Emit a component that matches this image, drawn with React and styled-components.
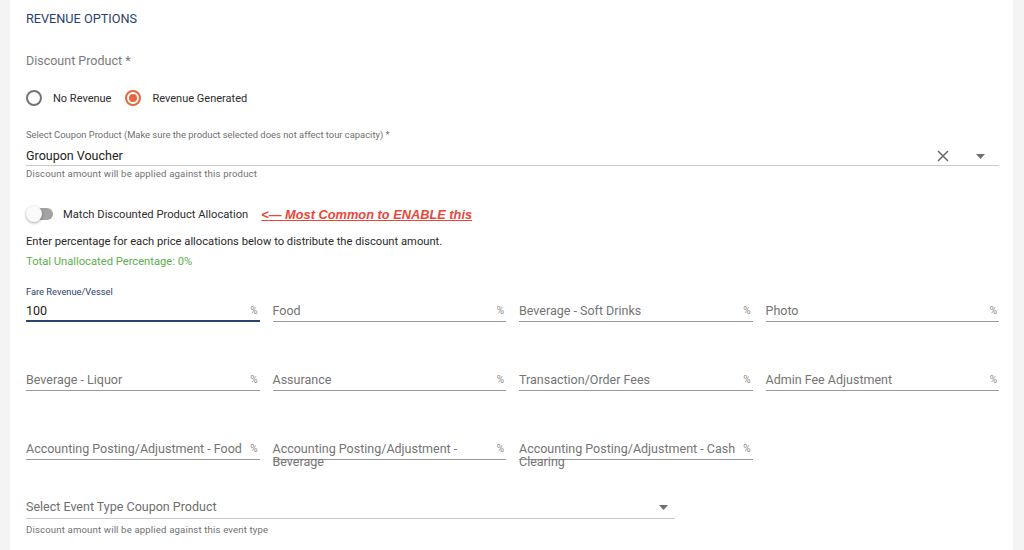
import React from 'react';
import styled, { createGlobalStyle } from 'styled-components';

const GlobalStyle = createGlobalStyle`
  html, body {
    margin: 0;
    padding: 0;
    background: #f4f4f4;
    font-family: Roboto, "Liberation Sans", Arial, sans-serif;
  }
`;

const Card = styled.section`
  margin: 0 11px 0 10px;
  padding: 0 14px 0 16px;
  background: #fff;
  height: 550px;
  overflow: hidden;
  box-sizing: border-box;
`;

const Title = styled.h3`
  margin: 0;
  height: 36px;
  line-height: 37px;
  font-size: 12.7px;
  font-weight: 400;
  color: #2b416e;
  text-transform: uppercase;
`;

const GroupLabel = styled.div`
  margin-top: 12px;
  height: 24px;
  line-height: 25px;
  font-size: 12.5px;
  color: #7b7b7b;
`;

const RadioRow = styled.div`
  margin-top: 14px;
  height: 24px;
  display: flex;
  align-items: center;
  gap: 14px;
`;

const RadioItem = styled.label`
  display: flex;
  align-items: center;
  gap: 11px;
  font-size: 11px;
  color: #2d2d2d;
`;

const RadioCircle = styled.span`
  width: 16px;
  height: 16px;
  border-radius: 50%;
  box-sizing: border-box;
  border: 2px solid ${p => (p.checked ? '#e8663d' : '#757575')};
  display: flex;
  align-items: center;
  justify-content: center;
  &::after {
    content: '';
    width: 8px;
    height: 8px;
    border-radius: 50%;
    background: ${p => (p.checked ? '#e8663d' : 'transparent')};
  }
`;

const Field = styled.div`
  margin-top: ${p => p.mt || 0}px;
  width: ${p => p.width || '100%'};
`;

const SmallLabel = styled.div`
  height: 12px;
  line-height: 13px;
  font-size: ${p => p.size || 9.4}px;
  color: ${p => p.color || '#6f6f6f'};
  white-space: nowrap;
`;

const SelectRow = styled.div`
  height: ${p => p.h || 26}px;
  padding-top: ${p => p.pt || 7}px;
  box-sizing: border-box;
  border-bottom: 1.5px solid #c9c9c9;
  display: flex;
  align-items: flex-start;
`;

const SelectValue = styled.div`
  flex: 1;
  line-height: 18px;
  font-size: 12.5px;
  color: ${p => (p.placeholder ? '#6e6e6e' : '#222')};
`;

const IconBox = styled.span`
  width: 20px;
  height: 18px;
  display: flex;
  align-items: center;
  justify-content: center;
  margin-left: ${p => p.ml || 0}px;
  margin-right: ${p => p.mr || 0}px;
`;

const Helper = styled.div`
  margin-top: ${p => p.mt || 2}px;
  line-height: 12px;
  font-size: 9.6px;
  color: #717171;
  letter-spacing: 0.15px;
`;

const ToggleRow = styled.div`
  margin-top: 24px;
  height: 20px;
  display: flex;
  align-items: center;
`;

const Track = styled.span`
  position: relative;
  width: 27px;
  height: 20px;
  display: inline-block;
  &::before {
    content: '';
    position: absolute;
    left: 4px;
    right: 0;
    top: 4px;
    height: 12px;
    border-radius: 6px;
    background: #a3a3a3;
  }
  &::after {
    content: '';
    position: absolute;
    left: 0;
    top: 2px;
    width: 16px;
    height: 16px;
    border-radius: 50%;
    background: #fafafa;
    box-shadow: 0 1px 3px rgba(0, 0, 0, 0.35);
  }
`;

const ToggleText = styled.span`
  margin-left: 10px;
  font-size: 11.2px;
  color: #2d2d2d;
`;

const Callout = styled.span`
  margin-left: 13px;
  margin-top: 1px;
  font-family: "Liberation Sans", Arial, sans-serif;
  font-size: 12.8px;
  font-weight: 700;
  font-style: italic;
  text-decoration: underline;
  color: #e8473a;
`;

const Instruction = styled.p`
  margin: 10px 0 0;
  line-height: 16px;
  font-size: 11.2px;
  color: #2a2a2a;
`;

const Unallocated = styled.p`
  margin: 4px 0 0;
  line-height: 16px;
  font-size: 11.2px;
  color: #5eae4e;
`;

const Grid = styled.div`
  margin-top: 15px;
  display: grid;
  grid-template-columns: repeat(4, 1fr);
  column-gap: 13px;
  row-gap: 31px;
`;

const Cell = styled.div`
  height: 38px;
`;

const InputRow = styled.div`
  height: 25px;
  box-sizing: border-box;
  padding-top: 7px;
  border-bottom: ${p => (p.focused ? '2px solid #2b416e' : '1px solid #9a9a9a')};
  display: flex;
  align-items: flex-start;
  gap: 6px;
`;

const InputText = styled.div`
  flex: 1;
  font-size: 12.5px;
  line-height: 13px;
  color: ${p => (p.filled ? '#222' : '#747474')};
`;

const Percent = styled.span`
  font-size: 10px;
  line-height: 13px;
  color: #8a8a8a;
  padding-right: 2px;
`;

const fields = [
  { label: 'Fare Revenue/Vessel', value: '100', focused: true },
  { label: 'Food' },
  { label: 'Beverage - Soft Drinks' },
  { label: 'Photo' },
  { label: 'Beverage - Liquor' },
  { label: 'Assurance' },
  { label: 'Transaction/Order Fees' },
  { label: 'Admin Fee Adjustment' },
  { label: 'Accounting Posting/Adjustment - Food' },
  { label: 'Accounting Posting/Adjustment - Beverage' },
  { label: 'Accounting Posting/Adjustment - Cash Clearing' },
];

const CloseIcon = () => (
  <svg width="12" height="12" viewBox="0 0 12 12">
    <path d="M1 1 L11 11 M11 1 L1 11" stroke="#6a6a6a" strokeWidth="1.5" fill="none" />
  </svg>
);

const Caret = () => (
  <svg width="9" height="5" viewBox="0 0 9 5">
    <path d="M0 0 H9 L4.5 5 Z" fill="#6f6f6f" />
  </svg>
);

function PercentField({ label, value, focused }) {
  return (
    <Cell>
      <SmallLabel color="#2b416e" size={9.3}>{value ? label : ''}</SmallLabel>
      <InputRow focused={focused}>
        <InputText filled={!!value}>{value || label}</InputText>
        <Percent>%</Percent>
      </InputRow>
    </Cell>
  );
}

export default function App() {
  return (
    <>
      <GlobalStyle />
      <Card>
        <Title>Revenue Options</Title>
        <GroupLabel>Discount Product *</GroupLabel>
        <RadioRow>
          <RadioItem>
            <RadioCircle />
            No Revenue
          </RadioItem>
          <RadioItem>
            <RadioCircle checked />
            Revenue Generated
          </RadioItem>
        </RadioRow>

        <Field mt={18}>
          <SmallLabel>
            Select Coupon Product (Make sure the product selected does not affect tour capacity) *
          </SmallLabel>
          <SelectRow>
            <SelectValue>Groupon Voucher</SelectValue>
            <IconBox><CloseIcon /></IconBox>
            <IconBox ml={17} mr={9}><Caret /></IconBox>
          </SelectRow>
          <Helper>Discount amount will be applied against this product</Helper>
        </Field>

        <ToggleRow>
          <Track />
          <ToggleText>Match Discounted Product Allocation</ToggleText>
          <Callout>&lt;— Most Common to ENABLE this</Callout>
        </ToggleRow>

        <Instruction>
          Enter percentage for each price allocations below to distribute the discount amount.
        </Instruction>
        <Unallocated>Total Unallocated Percentage: 0%</Unallocated>

        <Grid>
          {fields.map(f => (
            <PercentField key={f.label} {...f} />
          ))}
        </Grid>

        <Field mt={34} width="66.7%">
          <SelectRow h={24} pt={3}>
            <SelectValue placeholder="true">Select Event Type Coupon Product</SelectValue>
            <IconBox mr={1}><Caret /></IconBox>
          </SelectRow>
          <Helper mt={5}>Discount amount will be applied against this event type</Helper>
        </Field>
      </Card>
    </>
  );
}
